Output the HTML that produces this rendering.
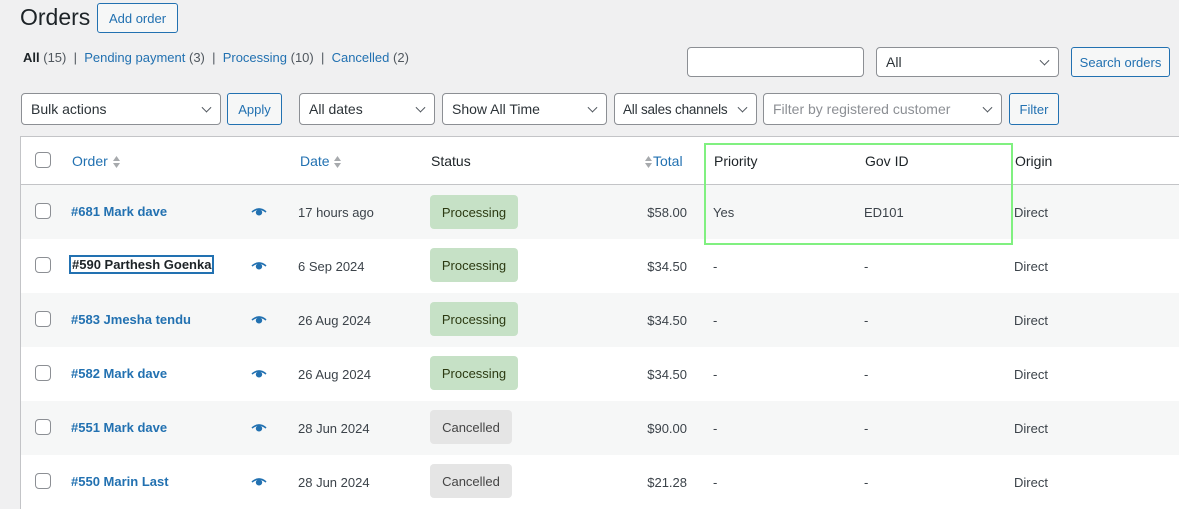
<!DOCTYPE html>
<html><head><meta charset="utf-8"><style>
*{box-sizing:border-box}
body{margin:0;width:1179px;height:509px;overflow:hidden;background:#f0f0f1;font-family:"Liberation Sans",sans-serif;font-size:13px;color:#3c434a;position:relative}
.a{position:absolute;white-space:nowrap}
.btn{position:absolute;border:1px solid #2271b1;color:#2271b1;background:#f6f7f7;border-radius:3px;display:flex;align-items:center;justify-content:center;font-size:13px}
.sel{position:absolute;border:1px solid #8c8f94;background:#fff;border-radius:4px;display:flex;align-items:center;padding-left:9px;font-size:14px;color:#2c3338;white-space:nowrap;overflow:hidden}
.sel:after{content:"";position:absolute;right:10px;top:50%;width:6px;height:6px;border-right:1.6px solid #50575e;border-bottom:1.6px solid #50575e;transform:translateY(-70%) rotate(45deg)}
.lnk{color:#2271b1}
.row{position:absolute;left:21px;width:1158px;height:54px}
.cb{position:absolute;left:14px;width:16px;height:16px;border:1px solid #8c8f94;border-radius:4px;background:#fff}
.pill{position:absolute;left:409px;height:34px;border-radius:4px;display:flex;align-items:center;justify-content:center;font-size:13px}
.pr{width:88px;background:#c6e1c6;color:#2c3a12}
.ca{width:82px;background:#e5e5e5;color:#454545}
.eye{position:absolute;left:230px;width:16px;height:8px}
.srt{display:inline-block;width:9px;height:14px;vertical-align:middle}
</style></head><body>
<div class="a" style="left:20px;top:4px;font-size:23px;color:#1d2327">Orders</div>
<div class="btn" style="left:97px;top:3px;width:81px;height:30px">Add order</div>
<div class="a" style="left:23px;top:50px;color:#50575e"><b style="color:#1d2327;font-weight:600">All</b> (15) &nbsp;| &nbsp;<span class="lnk">Pending payment</span> (3) &nbsp;| &nbsp;<span class="lnk">Processing</span> (10) &nbsp;| &nbsp;<span class="lnk">Cancelled</span> (2)</div>
<div class="a" style="left:687px;top:47px;width:177px;height:30px;background:#fff;border:1px solid #8c8f94;border-radius:4px"></div>
<div class="sel" style="left:876px;top:47px;width:183px;height:30px">All</div>
<div class="btn" style="left:1071px;top:47px;width:99px;height:30px">Search orders</div>
<div class="sel" style="left:21px;top:93px;width:200px;height:32px">Bulk actions</div>
<div class="btn" style="left:227px;top:93px;width:55px;height:32px">Apply</div>
<div class="sel" style="left:299px;top:93px;width:136px;height:32px">All dates</div>
<div class="sel" style="left:442px;top:93px;width:165px;height:32px">Show All Time</div>
<div class="sel" style="left:614px;top:93px;width:143px;height:32px;padding-left:8px;font-size:13.5px;letter-spacing:-0.2px">All sales channels</div>
<div class="sel" style="left:763px;top:93px;width:239px;height:32px;color:#8c8f94">Filter by registered customer</div>
<div class="btn" style="left:1009px;top:93px;width:50px;height:32px">Filter</div>

<div class="a" style="left:20px;top:136px;width:1159px;height:373px;background:#fff;border:1px solid #c3c4c7;border-right:none;border-bottom:none"></div>
<div class="a" style="left:21px;top:184px;width:1158px;height:1px;background:#c3c4c7"></div>
<div class="cb" style="left:35px;top:152px"></div>
<div class="a lnk" style="left:72px;top:153px;font-size:14px">Order <svg class="srt" viewBox="0 0 9 14"><path d="M4.5 1L8 6H1zM4.5 13L8 8H1z" fill="#a7aaad"/></svg></div>
<div class="a lnk" style="left:300px;top:153px;font-size:14px">Date <svg class="srt" viewBox="0 0 9 14"><path d="M4.5 1L8 6H1zM4.5 13L8 8H1z" fill="#a7aaad"/></svg></div>
<div class="a" style="left:431px;top:153px;font-size:14px;color:#1d2327">Status</div>
<div class="a lnk" style="left:644px;top:153px;font-size:14px"><svg class="srt" viewBox="0 0 9 14"><path d="M4.5 1L8 6H1zM4.5 13L8 8H1z" fill="#a7aaad"/></svg>Total</div>
<div class="a" style="left:714px;top:153px;font-size:14px;color:#1d2327">Priority</div>
<div class="a" style="left:865px;top:153px;font-size:14px;color:#1d2327">Gov ID</div>
<div class="a" style="left:1015px;top:153px;font-size:14px;color:#1d2327">Origin</div>

<div id="rows"></div>
<script>
var d=[["#681 Mark dave","17 hours ago","P","$58.00","Yes","ED101"],["#590 Parthesh Goenka","6 Sep 2024","P","$34.50","-","-"],["#583 Jmesha tendu","26 Aug 2024","P","$34.50","-","-"],["#582 Mark dave","26 Aug 2024","P","$34.50","-","-"],["#551 Mark dave","28 Jun 2024","C","$90.00","-","-"],["#550 Marin Last","28 Jun 2024","C","$21.28","-","-"]];
var h="";d.forEach(function(r,i){var t=185+i*54;
h+='<div class="row" style="top:'+t+'px;background:'+(i%2==0?'#f6f7f7':'#fff')+'">'+
'<div class="cb" style="top:18px"></div>'+
'<div class="a" style="left:'+(i==1?48:50)+'px;top:'+(i==1?16:19)+'px;font-weight:bold;color:'+(i==1?'#1d2327':'#2271b1')+(i==1?';border:2px solid #2271b1;padding:0 1px':'')+'">'+r[0]+'</div>'+
'<svg class="eye" style="top:23px" viewBox="0 0 16 8"><path d="M1 4Q8-2 15 4" stroke="#2271b1" stroke-width="1.6" fill="none"/><ellipse cx="8" cy="4.5" rx="3.2" ry="3" fill="#2271b1"/></svg>'+
'<div class="a" style="left:277px;top:20px">'+r[1]+'</div>'+
'<div class="pill '+(r[2]=="P"?"pr":"ca")+'" style="top:'+(i==0?10:9)+'px">'+(r[2]=="P"?"Processing":"Cancelled")+'</div>'+
'<div class="a" style="left:600px;width:66px;text-align:right;top:20px">'+r[3]+'</div>'+
'<div class="a" style="left:692px;top:20px">'+r[4]+'</div>'+
'<div class="a" style="left:843px;top:20px">'+r[5]+'</div>'+
'<div class="a" style="left:993px;top:20px">Direct</div></div>';});
document.getElementById("rows").innerHTML=h;
</script>
<div class="a" style="left:704px;top:143px;width:309px;height:102px;border:2px solid #80f080"></div>
</body></html>
